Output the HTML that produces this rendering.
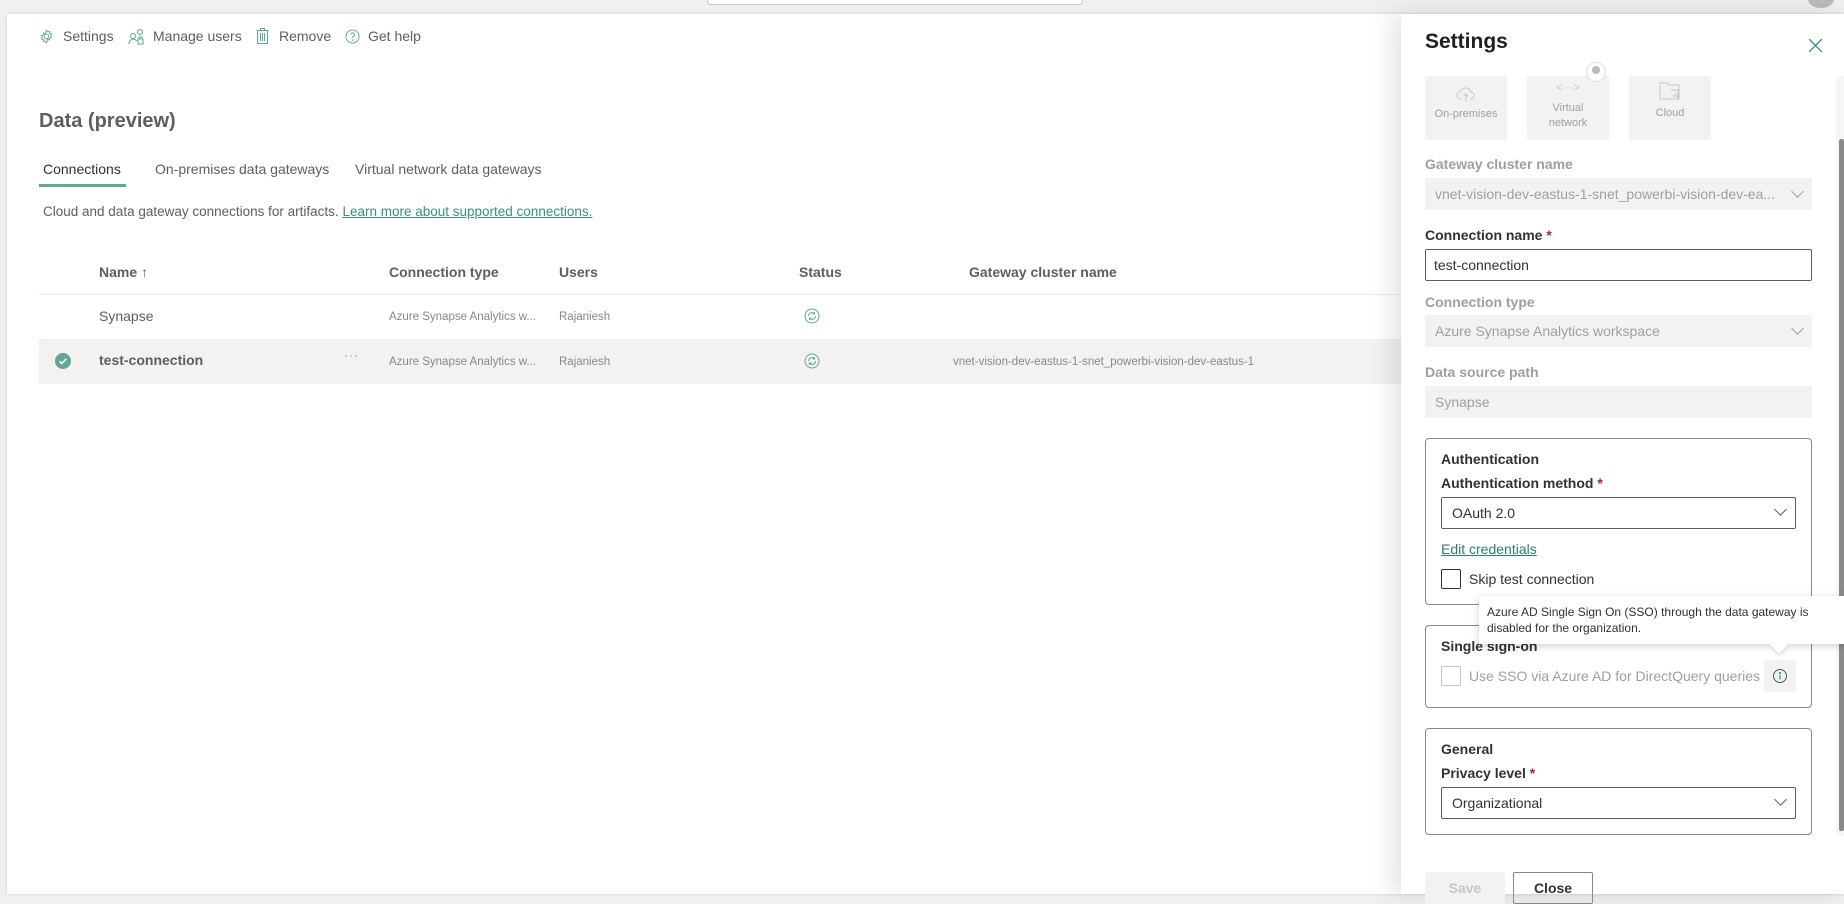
<!DOCTYPE html>
<html><head><meta charset="utf-8"><style>
*{box-sizing:border-box;margin:0;padding:0}
body{width:1844px;height:894px;overflow:hidden;background:#f0f0f0;font-family:"Liberation Sans",sans-serif;position:relative;color:#323130}
.a{position:absolute;white-space:nowrap}
.main{position:absolute;left:7px;top:14px;width:1840px;height:880px;background:#fff;box-shadow:0 0 3px rgba(0,0,0,.15)}
.tb{font-size:14px;color:#605e5c;top:28px}
.g{color:#605e5c}
.hd{font-size:14px;color:#605e5c;font-weight:bold;top:264px}
.cell{font-size:11.5px;color:#8a8886}
.panel{position:absolute;left:1401px;top:14px;width:443px;height:880px;background:#fff;box-shadow:-8px 0 24px rgba(0,0,0,.12)}
.lbl{font-size:14px;font-weight:bold;color:#a19f9d}
.lblb{font-size:14px;font-weight:bold;color:#323130}
.req{color:#a4262c}
.dis{position:absolute;background:#f3f2f1;height:32px;left:1425px;width:387px;font-size:14px;color:#a19f9d;padding:8px 10px}
.box{position:absolute;border:1px solid #8a8886;border-radius:4px;left:1425px;width:387px}
.dd{position:absolute;border:1px solid #605e5c;border-radius:2px;height:32px;font-size:14px;padding:7px 10px;color:#323130}
.chev{position:absolute;right:10px;top:11px;width:9px;height:9px;border-right:1px solid #605e5c;border-bottom:1px solid #605e5c;transform:rotate(45deg);top:7px}
.card{position:absolute;top:76px;width:82px;height:64px;background:#f3f2f1;font-size:11px;color:#a19f9d;text-align:center}
</style></head><body>
<div class="a" style="left:707px;top:-2px;width:376px;height:7px;background:#fff;border:1px solid #c8c6c4;border-radius:4px"></div>
<div class="a" style="left:1808px;top:-10px;width:26px;height:18px;border-radius:50%;background:#bbb"></div>
<div class="main"></div>
<!-- toolbar -->
<svg class="a" style="left:39px;top:29px" width="15" height="15" viewBox="0 0 16 16" fill="none" stroke="#5fa898" stroke-width="1"><circle cx="8" cy="8" r="2.5"/><path d="M8 1.5l1.2 1.6 2-.6.3 2 1.9.8-.9 1.8.9 1.8-1.9.8-.3 2-2-.6L8 14.5l-1.2-1.6-2 .6-.3-2-1.9-.8.9-1.8-.9-1.8 1.9-.8.3-2 2 .6z"/></svg>
<div class="a tb" style="left:63px">Settings</div>
<svg class="a" style="left:128px;top:28px" width="18" height="17" viewBox="0 0 18 17" fill="none" stroke="#5fa898"><circle cx="5" cy="8" r="2.5"/><path d="M1 16c0-3 2-5 4-5s3 1 4 2"/><circle cx="12" cy="4" r="2.5"/><rect x="10" y="11" width="5" height="5"/><path d="M11 11v-2h3v2"/></svg>
<div class="a tb" style="left:153px">Manage users</div>
<svg class="a" style="left:256px;top:28px" width="13" height="16" viewBox="0 0 13 16" fill="none" stroke="#5fa898"><path d="M.5 2.5h12M4.5 2.5V.5h4v2M1.5 2.5v13h10v-13M4.5 5v8M6.5 5v8M8.5 5v8"/></svg>
<div class="a tb" style="left:279px">Remove</div>
<svg class="a" style="left:345px;top:29px" width="15" height="15" viewBox="0 0 16 16" fill="none" stroke="#5fa898"><circle cx="8" cy="8" r="7"/><path d="M6 6a2 2 0 1 1 2.5 2c-.5.3-.5.8-.5 1.5"/><circle cx="8" cy="11.8" r=".4" fill="#5fa898"/></svg>
<div class="a tb" style="left:368px">Get help</div>
<div class="a" style="left:39px;top:110px;font-size:20px;font-weight:bold;color:#605e5c">Data (preview)</div>
<div class="a" style="left:43px;top:161px;font-size:14px;color:#323130">Connections</div>
<div class="a" style="left:39px;top:184px;width:87px;height:3px;background:#5fa898"></div>
<div class="a" style="left:155px;top:161px;font-size:14px;color:#605e5c">On-premises data gateways</div>
<div class="a" style="left:355px;top:161px;font-size:14px;color:#605e5c">Virtual network data gateways</div>
<div class="a" style="left:43px;top:204px;font-size:13.5px;color:#605e5c">Cloud and data gateway connections for artifacts. <span style="color:#3c8d7f;text-decoration:underline">Learn more about supported connections.</span></div>
<div class="a hd" style="left:99px">Name ↑</div>
<div class="a hd" style="left:389px">Connection type</div>
<div class="a hd" style="left:559px">Users</div>
<div class="a hd" style="left:799px">Status</div>
<div class="a hd" style="left:969px">Gateway cluster name</div>
<div class="a" style="left:39px;top:294px;width:1370px;height:1px;background:#edebe9"></div>
<div class="a" style="left:99px;top:308px;font-size:14px;color:#605e5c">Synapse</div>
<div class="a cell" style="left:389px;top:311px">Azure Synapse Analytics w...</div>
<div class="a cell" style="left:559px;top:311px">Rajaniesh</div>
<div class="a" style="left:39px;top:339px;width:1370px;height:45px;background:#f3f2f1"></div>
<div class="a" style="left:55px;top:353px;width:16px;height:16px;border-radius:50%;background:#5fa898"></div>
<svg class="a" style="left:55px;top:353px" width="16" height="16"><path d="M4.5 8.3l2.3 2.2 4.5-4.6" stroke="#fff" stroke-width="1.6" fill="none"/></svg>
<div class="a" style="left:99px;top:352px;font-size:14px;font-weight:bold;color:#605e5c">test-connection</div>
<div class="a" style="left:344px;top:348px;font-size:12px;color:#8a8886;letter-spacing:1px">···</div>
<div class="a cell" style="left:389px;top:356px">Azure Synapse Analytics w...</div>
<div class="a cell" style="left:559px;top:356px">Rajaniesh</div>
<div class="a cell" style="left:953px;top:356px">vnet-vision-dev-eastus-1-snet_powerbi-vision-dev-eastus-1</div>
<svg class="a" style="left:804px;top:308px" width="16" height="16" viewBox="0 0 16 16" fill="none" stroke="#5fa898"><circle cx="8" cy="8" r="7"/><path d="M4.5 8a3.5 3.5 0 0 1 6-2.3M11.5 8a3.5 3.5 0 0 1-6 2.3M10.5 4v2h-2M5.5 12v-2h2"/></svg>
<svg class="a" style="left:804px;top:353px" width="16" height="16" viewBox="0 0 16 16" fill="none" stroke="#5fa898"><circle cx="8" cy="8" r="7"/><path d="M4.5 8a3.5 3.5 0 0 1 6-2.3M11.5 8a3.5 3.5 0 0 1-6 2.3M10.5 4v2h-2M5.5 12v-2h2"/></svg>

<!-- panel -->
<div class="panel"></div>
<div class="a" style="left:1425px;top:30px;font-size:21px;font-weight:bold;color:#201f1e">Settings</div>
<svg class="a" style="left:1809px;top:39px" width="13" height="13"><path d="M0 0L13 13M13 0L0 13" stroke="#2b8a8f" stroke-width="1.3"/></svg>
<div class="a" style="left:1836px;top:76px;width:8px;height:760px;background:#f6f6f6"></div>
<div class="a" style="left:1839px;top:139px;width:5px;height:692px;background:#8a8a8a;border-radius:2px"></div>
<div class="card" style="left:1425px"><svg style="margin-top:10px" width="20" height="16" viewBox="0 0 20 16" fill="none" stroke="#c8c6c4"><path d="M6 13H5a4 4 0 0 1 0-8 5 5 0 0 1 9.5 1 3.5 3.5 0 0 1 .5 7h-1M10 15V8M7.5 10.5L10 8l2.5 2.5"/></svg><div style="margin-top:3px">On-premises</div></div>
<div class="card" style="left:1527px"><div style="margin-top:6px;font-size:11px;color:#c8c6c4">&lt;···&gt;</div><div style="margin-top:7px;line-height:15px">Virtual<br>network</div></div>
<div class="a" style="left:1586px;top:62px;width:20px;height:20px;border-radius:50%;background:#fff;border:1px solid #ddd"></div>
<div class="a" style="left:1592px;top:66px;width:8px;height:8px;border-radius:50%;background:#bbb"></div>
<div class="card" style="left:1629px"><svg style="margin-top:5px" width="22" height="20" viewBox="0 0 22 20" fill="none" stroke="#c8c6c4"><path d="M1 2h7l2 2h10v14H1zM12 9h7v9h-7M14 16v-2M16 16v-4M18 16v-3"/></svg><div style="margin-top:3px">Cloud</div></div>

<div class="a lbl" style="left:1425px;top:156px">Gateway cluster name</div>
<div class="dis" style="top:178px">vnet-vision-dev-eastus-1-snet_powerbi-vision-dev-ea...<div class="chev" style="border-color:#a19f9d;top:9px"></div></div>
<div class="a lblb" style="left:1425px;top:227px">Connection name <span class="req">*</span></div>
<div class="a" style="left:1425px;top:249px;width:387px;height:32px;border:1px solid #605e5c;border-radius:2px;font-size:14px;padding:7px 8px">test-connection</div>
<div class="a lbl" style="left:1425px;top:294px">Connection type</div>
<div class="dis" style="top:315px">Azure Synapse Analytics workspace<div class="chev" style="border-color:#a19f9d;top:9px"></div></div>
<div class="a lbl" style="left:1425px;top:364px">Data source path</div>
<div class="dis" style="top:386px">Synapse</div>

<div class="box" style="top:438px;height:167px"></div>
<div class="a lblb" style="left:1441px;top:451px">Authentication</div>
<div class="a lblb" style="left:1441px;top:475px">Authentication method <span class="req">*</span></div>
<div class="dd" style="left:1441px;top:497px;width:355px">OAuth 2.0<div class="chev"></div></div>
<div class="a" style="left:1441px;top:541px;font-size:14px;color:#2a7f72;text-decoration:underline">Edit credentials</div>
<div class="a" style="left:1441px;top:569px;width:20px;height:20px;border:1px solid #323130;border-radius:2px"></div>
<div class="a" style="left:1469px;top:571px;font-size:14px">Skip test connection</div>

<div class="box" style="top:625px;height:83px"></div>
<div class="a lblb" style="left:1441px;top:638px">Single sign-on</div>
<div class="a" style="left:1441px;top:666px;width:20px;height:20px;border:1px solid #c8c6c4;border-radius:2px"></div>
<div class="a" style="left:1469px;top:668px;font-size:14px;color:#a19f9d">Use SSO via Azure AD for DirectQuery queries</div>
<div class="a" style="left:1764px;top:660px;width:32px;height:32px;background:#f3f2f1"></div>
<svg class="a" style="left:1772px;top:668px" width="16" height="16" viewBox="0 0 16 16" fill="none" stroke="#1f6f63"><circle cx="8" cy="8" r="6.5"/><path d="M8 7v4.5"/><circle cx="8" cy="5" r=".5" fill="#1f6f63"/></svg>
<div class="a" style="left:1479px;top:596px;width:370px;height:48px;background:#fff;box-shadow:0 2px 8px rgba(0,0,0,.18);font-size:12px;color:#323130;padding:8px 0 0 8px;line-height:16px;white-space:normal">Azure AD Single Sign On (SSO) through the data gateway is<br>disabled for the organization.</div>
<div class="a" style="left:1773px;top:639px;width:12px;height:12px;background:#fff;transform:rotate(45deg);box-shadow:2px 2px 3px rgba(0,0,0,.1)"></div>

<div class="box" style="top:728px;height:107px"></div>
<div class="a lblb" style="left:1441px;top:741px">General</div>
<div class="a lblb" style="left:1441px;top:765px">Privacy level <span class="req">*</span></div>
<div class="dd" style="left:1441px;top:787px;width:355px">Organizational<div class="chev"></div></div>

<div class="a" style="left:1425px;top:872px;width:80px;height:32px;background:#f3f2f1;border-radius:2px;font-size:14px;font-weight:bold;color:#c8c6c4;text-align:center;padding-top:8px">Save</div>
<div class="a" style="left:1513px;top:872px;width:80px;height:32px;border:1px solid #8a8886;border-radius:2px;font-size:14px;font-weight:bold;color:#323130;text-align:center;padding-top:7px">Close</div>
</body></html>
